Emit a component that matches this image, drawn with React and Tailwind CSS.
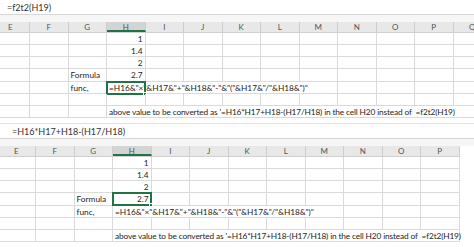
const FONT = { fontFamily: 'Lato, "Liberation Sans", sans-serif' };

const FUNC_TEXT = '=H16&"×"&H17&"+"&H18&"-"&"("&H17&"/"&H18&")"';
const NOTE_TEXT =
  "above value to be converted as '=H16*H17+H18-(H17/H18) in the cell H20 instead of  =f2t2(H19)";

// rows: map of column letter -> { text, align, span, tight }; span 'rest' runs to the last column
const ROWS = [
  { H: { text: '1', align: 'right' } },
  { H: { text: '1.4', align: 'right' } },
  { H: { text: '2', align: 'right' } },
  { G: { text: 'Formula' }, H: { text: '2.7', align: 'right' } },
  { G: { text: 'func,' }, H: { text: FUNC_TEXT, span: 6 } },
  {},
  { H: { text: NOTE_TEXT, span: 'rest', tight: true } },
];

const Selection = () => (
  <div className="absolute -top-[1px] -left-[1px] w-[40px] h-[14px] border-2 border-[#217346] pointer-events-none">
    <div className="absolute -right-[3px] -bottom-[3px] w-[4px] h-[4px] bg-[#217346] border border-white" />
  </div>
);

const Sheet = ({ formula, formulaPad, shift, cols, selected }) => (
  <div className="overflow-hidden bg-white">
    <div
      className="h-[15px] border-b border-[#d6d6d6] text-[9px] leading-[15px] text-[#333] whitespace-pre"
      style={{ ...FONT, paddingLeft: formulaPad }}
    >
      {formula}
    </div>
    <div className="h-[7px] bg-[#f6f6f6]" />
    <div className="flex w-max h-[11px] bg-[#e8e8e8] border-b border-[#cfcfcf]" style={{ marginLeft: shift }}>
      {cols.map((c) => (
        <div
          key={c}
          className={`shrink-0 w-[38.5px] h-full border-r border-[#cdcdcd] text-center text-[8px] leading-[11px] text-[#555] ${
            c === 'H' ? 'bg-[#d4d4d4] border-b-2 border-b-[#217346]' : ''
          }`}
          style={FONT}
        >
          {c}
        </div>
      ))}
    </div>
    {ROWS.map((row, ri) => {
      const cells = [];
      for (let i = 0; i < cols.length; i++) {
        const c = cols[i];
        const cell = row[c];
        const span = cell?.span === 'rest' ? cols.length - i : cell?.span ?? 1;
        const isSel = selected.row === ri && selected.col === c;
        cells.push(
          <div
            key={c}
            className={`relative shrink-0 h-full border-r border-[#dadada] text-[8.3px] leading-[12px] text-[#1e1e1e] whitespace-pre ${
              cell?.tight ? 'tracking-[-0.14px]' : ''
            }`}
            style={{
              ...FONT,
              width: 38.5 * span,
              textAlign: cell?.align === 'right' ? 'right' : 'left',
              paddingLeft: 2,
              paddingRight: 2,
            }}
          >
            {cell?.text}
            {isSel && <Selection />}
          </div>
        );
        i += span - 1;
      }
      return (
        <div key={ri} className="flex w-max h-[12.15px] border-b border-[#dadada]" style={{ marginLeft: shift }}>
          {cells}
        </div>
      );
    })}
  </div>
);

export default function App() {
  return (
    <div className="w-[474px] h-[247px] bg-white overflow-hidden">
      <Sheet
        formula="=f2t2(H19)"
        formulaPad={7}
        shift={-8.5}
        cols={['E', 'F', 'G', 'H', 'I', 'J', 'K', 'L', 'M', 'N', 'O', 'P', 'Q']}
        selected={{ row: 4, col: 'H' }}
      />
      <div className="h-[5px] bg-white" />
      <div className="border-t border-[#e0e0e0]">
        <Sheet
          formula="=H16*H17+H18-(H17/H18)"
          formulaPad={12}
          shift={-2.5}
          cols={['E', 'F', 'G', 'H', 'I', 'J', 'K', 'L', 'M', 'N', 'O', 'P']}
          selected={{ row: 3, col: 'H' }}
        />
      </div>
    </div>
  );
}
